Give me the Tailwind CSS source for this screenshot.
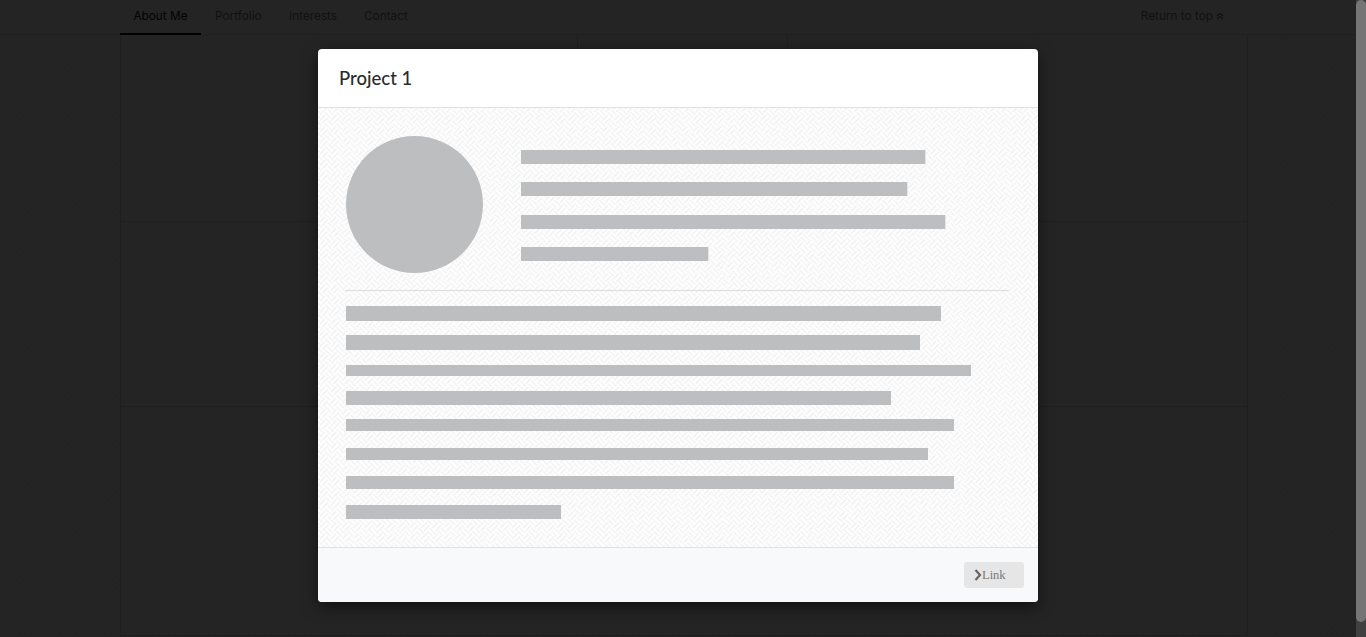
<!DOCTYPE html>
<html lang="en">
<head>
  <meta charset="utf-8"/>
  <meta content="width=device-width, initial-scale=1.0" name="viewport"/>
  <title>Project 1</title>
  <script src="https://cdn.jsdelivr.net/npm/@tailwindcss/browser@4"></script>
</head>
<body class="h-screen overflow-hidden bg-white font-['Lato',sans-serif]">
  <!-- shared weave pattern -->
  <svg class="absolute w-0 h-0" aria-hidden="true">
    <defs>
      <pattern id="weave" width="16" height="16" patternUnits="userSpaceOnUse" patternTransform="rotate(45)">
        <path d="M0 2H8M0 6H8M8 10H16M8 14H16M10 0V8M14 0V8M2 8V16M6 8V16" stroke="#ececec" stroke-width="1.2" fill="none"/>
      </pattern>
    </defs>
  </svg>

  <div class="flex h-full">
    <div class="relative flex-1 overflow-hidden">
      <svg class="absolute inset-0 w-full h-full" aria-hidden="true"><rect width="100%" height="100%" fill="url(#weave)"/></svg>

      <!-- Page behind the modal -->
      <nav class="relative h-[35px] bg-white border-b border-[#ddd] flex justify-between pl-[120px] pr-[132px] font-['Inter',sans-serif] text-[11.8px] text-[#777]">
        <ul class="flex">
          <li class="w-[81px] h-[35px] border-b-2 border-black text-[#111] flex justify-center pt-[8px]">About Me</li>
          <li class="ml-[14px] pt-[8px] w-[46px]">Portfolio</li>
          <li class="ml-[28px] pt-[8px] w-[47px]">Interests</li>
          <li class="ml-[28px] pt-[8px]">Contact</li>
        </ul>
        <a class="pt-[8px] flex gap-[3px]" href="#">
          Return to top
          <svg class="w-[8px] h-[8px] mt-[4px]" viewBox="0 0 8 8" fill="none" stroke="currentColor" stroke-width="1.3"><path d="M1 4 4 1.5 7 4M1 7 4 4.5 7 7"/></svg>
        </a>
      </nav>
      <main class="relative ml-[120px] w-[1128px] border-x border-[#ddd] bg-white">
        <section class="h-[187px] border-b border-[#ddd] grid grid-cols-[457px_210px_1fr]">
          <div class="border-r border-[#ddd]"></div>
          <div class="border-r border-[#ddd]"></div>
          <div></div>
        </section>
        <section class="h-[185px] border-b border-[#ddd]"></section>
        <section class="h-[229px] border-b border-[#ddd]"></section>
      </main>

      <!-- Backdrop + modal -->
      <div class="absolute inset-0 bg-black/[0.86] flex justify-center items-start pt-[49px]">
        <div class="w-[720px] h-[553px] bg-white rounded-[4px] shadow-[0_5px_15px_rgba(0,0,0,0.5)] flex flex-col overflow-hidden">
          <header class="h-[59px] shrink-0 border-b border-[#dee2e6] pl-[21px] pt-[17px]">
            <h5 class="text-[18.5px] leading-[24px] font-medium text-[#2b2b2b]">Project 1</h5>
          </header>
          <div class="relative flex-1 pl-[28px]">
            <svg class="absolute inset-0 w-full h-full" aria-hidden="true"><rect width="100%" height="100%" fill="url(#weave)"/></svg>
            <div class="relative">
              <div class="flex h-[182px] pt-[28px]">
                <div class="w-[137px] h-[137px] rounded-full bg-[#bdbec0] shrink-0"></div>
                <div class="ml-[38px] pt-[14px] flex flex-col gap-[18.4px]">
                  <div class="h-[14px] w-[405px] bg-[#bdbec0] border-r border-[#e6e6e6]"></div>
                  <div class="h-[14px] w-[387px] bg-[#bdbec0] border-r border-[#e6e6e6]"></div>
                  <div class="h-[14px] w-[425px] bg-[#bdbec0] border-r border-[#e6e6e6]"></div>
                  <div class="h-[14px] w-[188px] bg-[#bdbec0] border-r border-[#e6e6e6]"></div>
                </div>
              </div>
              <div class="h-px w-[664px] -ml-px bg-[#dcdcdc]"></div>
              <div class="flex flex-col pt-[15px]">
                <div class="h-[15px] w-[595px] bg-[#bdbec0]"></div>
                <div class="mt-[14px] h-[15px] w-[574px] bg-[#bdbec0]"></div>
                <div class="mt-[15px] h-[11px] w-[625px] bg-[#bdbec0]"></div>
                <div class="mt-[15px] h-[14px] w-[545px] bg-[#bdbec0]"></div>
                <div class="mt-[14px] h-[12px] w-[608px] bg-[#bdbec0]"></div>
                <div class="mt-[17px] h-[12px] w-[582px] bg-[#bdbec0]"></div>
                <div class="mt-[16px] h-[13px] w-[608px] bg-[#bdbec0]"></div>
                <div class="mt-[16px] h-[14px] w-[215px] bg-[#bdbec0]"></div>
              </div>
            </div>
          </div>
          <footer class="h-[55px] shrink-0 border-t border-[#dee2e6] bg-[#f8f9fb] flex justify-end pt-[14px] pr-[14px]">
            <a class="w-[60px] h-[26px] bg-[#e6e6e6] rounded-[3px] pl-[10px] flex items-center font-['Liberation_Serif',serif] text-[12.5px] text-[#777]" href="#">
              <svg class="w-[8px] h-[12px] shrink-0" viewBox="0 0 8 12" fill="none" stroke="#666" stroke-width="2.2"><path d="M1.5 1 6 6 1.5 11"/></svg>
              Link
            </a>
          </footer>
        </div>
      </div>
    </div>

    <!-- Scrollbar -->
    <div class="w-[10px] shrink-0 bg-[#404040]">
      <div class="h-[622px] bg-[#757575] rounded-[5px]"></div>
    </div>
  </div>
</body>
</html>
